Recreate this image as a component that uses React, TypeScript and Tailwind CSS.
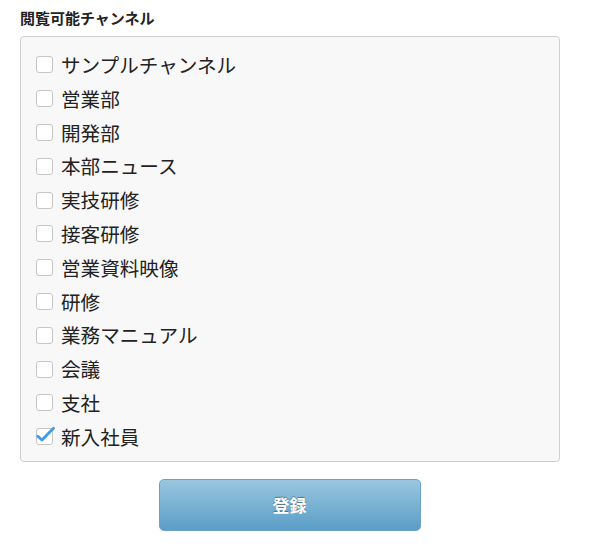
import React from "react";

const channels: { name: string; checked: boolean }[] = [
  { name: "サンプルチャンネル", checked: false },
  { name: "営業部", checked: false },
  { name: "開発部", checked: false },
  { name: "本部ニュース", checked: false },
  { name: "実技研修", checked: false },
  { name: "接客研修", checked: false },
  { name: "営業資料映像", checked: false },
  { name: "研修", checked: false },
  { name: "業務マニュアル", checked: false },
  { name: "会議", checked: false },
  { name: "支社", checked: false },
  { name: "新入社員", checked: true },
];

function Box({ checked }: { checked: boolean }) {
  return (
    <span className="relative w-[17px] h-[17px] shrink-0 rounded-[3px] border-[1.5px] border-[#c6c6c6] bg-white">
      {checked && (
        <svg
          viewBox="0 0 17 17"
          className="absolute left-[-1.5px] top-[-1.5px] w-[17px] h-[17px] overflow-visible"
        >
          <path
            d="M1.8 8.2 L6 12 L17.5 0.2"
            fill="none"
            stroke="#3e9ce8"
            strokeWidth="2.8"
            strokeLinecap="round"
            strokeLinejoin="round"
          />
        </svg>
      )}
    </span>
  );
}

export default function App() {
  return (
    <div
      className="w-[600px] h-[548px] bg-white pl-5 pt-[9px]"
      style={{ fontFamily: '"Noto Sans CJK JP", "Noto Sans", sans-serif' }}
    >
      <div className="w-[540px]">
        <div className="text-[15px] font-bold leading-[18px] text-[#222]">
          閲覧可能チャンネル
        </div>
        <div className="mt-[9px] rounded-[4px] border border-[#cfcfcf] bg-[#f8f8f8] pt-[11px] pb-[7px] pl-[15px]">
          {channels.map((c) => (
            <div key={c.name} className="flex items-center h-[33.8px] gap-[8px]">
              <Box checked={c.checked} />
              <span className="text-[19.6px] leading-none text-[#222]">{c.name}</span>
            </div>
          ))}
        </div>
        <div className="flex justify-center mt-[17px]">
          <button
            type="button"
            className="w-[262px] h-[52px] rounded-[5px] border border-[#6aa3c8] bg-gradient-to-b from-[#99c7e0] to-[#5a9dc6] text-white text-[17px] font-bold [text-shadow:0_-1px_1px_rgba(0,0,0,0.35)] ml-[-1px]"
          >
            登録
          </button>
        </div>
      </div>
    </div>
  );
}
